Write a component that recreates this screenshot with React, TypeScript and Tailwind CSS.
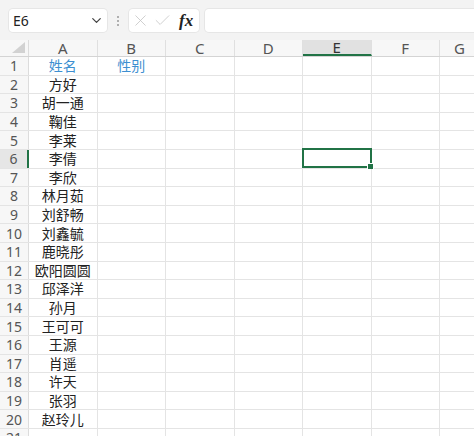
import { ChevronDown, X, Check } from 'lucide-react';

const COLS = ['A', 'B', 'C', 'D', 'E', 'F', 'G'];
const NAMES = [
  '方好', '胡一通', '鞠佳', '李莱', '李倩', '李欣', '林月茹', '刘舒畅', '刘鑫毓', '鹿晓彤',
  '欧阳圆圆', '邱泽洋', '孙月', '王可可', '王源', '肖遥', '许天', '张羽', '赵玲儿',
];

const FONT = { fontFamily: '"Noto Sans", "Noto Sans CJK SC", sans-serif' };
const COL_W = 'w-[68.5px]';

function Toolbar() {
  return (
    <div className="flex h-[40px] items-start bg-[#f3f3f3] pl-[9px] pt-[9px]">
      <div className="flex h-[23px] w-[98px] items-center justify-between rounded-[4px] bg-white pl-[4px] pr-[3px] shadow-[0_0_0_1px_#e6e6e6]">
        <span className="text-[14px] text-[#222]">E6</span>
        <ChevronDown className="h-[15px] w-[15px] text-[#444]" strokeWidth={2} />
      </div>
      <div className="flex h-[23px] w-[22px] flex-col items-center justify-center gap-[2px]">
        <span className="h-[2px] w-[2px] rounded-full bg-[#999]" />
        <span className="h-[2px] w-[2px] rounded-full bg-[#999]" />
        <span className="h-[2px] w-[2px] rounded-full bg-[#999]" />
      </div>
      <div className="flex h-[23px] w-[70px] items-center rounded-[4px] bg-white pl-[2px] shadow-[0_0_0_1px_#e6e6e6]">
        <X className="h-[19px] w-[19px] text-[#c4c4c4]" strokeWidth={1} />
        <Check className="ml-[3px] h-[19px] w-[19px] text-[#c4c4c4]" strokeWidth={1} />
        <span
          className="ml-[7px] text-[17px] font-bold italic leading-none text-[#222]"
          style={{ fontFamily: '"Liberation Serif", serif' }}
        >
          fx
        </span>
      </div>
      <div className="ml-[6px] h-[23px] flex-1 rounded-l-[4px] bg-white shadow-[0_0_0_1px_#e6e6e6]" />
    </div>
  );
}

function HeaderRow() {
  return (
    <div className="flex h-[17px] border-b border-[#d4d4d4] bg-[#f7f7f7]">
      <div className="relative w-[29px] shrink-0 border-r border-[#dcdcdc]">
        <div className="absolute bottom-[3px] right-[3px] h-0 w-0 border-b-[11px] border-l-[13px] border-b-[#d2d2d2] border-l-transparent" />
      </div>
      {COLS.map((c) => (
        <div
          key={c}
          className={`${c === 'G' ? 'w-[40px]' : COL_W} flex shrink-0 items-center justify-center border-r border-[#e0e0e0] text-[15px] leading-none ${
            c === 'E' ? 'border-b-2 border-b-[#217346] bg-[#e1e1e1] text-[#333]' : 'text-[#555]'
          }`}
        >
          {c}
        </div>
      ))}
    </div>
  );
}

function Row({ n }: { n: number }) {
  const selected = n === 6;
  let a = '';
  let b = '';
  if (n === 1) {
    a = '姓名';
    b = '性别';
  } else if (n - 2 < NAMES.length) {
    a = NAMES[n - 2];
  }
  return (
    <div className="flex h-[18.6px] border-b border-[#e4e4e4]">
      <div
        className={`flex w-[29px] shrink-0 items-center justify-center text-[14px] text-[#555] ${
          selected ? 'border-r-2 border-r-[#217346] bg-[#e6e6e6]' : 'border-r border-[#dcdcdc] bg-[#f7f7f7]'
        }`}
      >
        {n}
      </div>
      {COLS.map((c) => (
        <div
          key={c}
          className={`${c === 'G' ? 'w-[40px]' : COL_W} relative flex shrink-0 items-center justify-center border-r border-[#e4e4e4] text-[14px] ${
            n === 1 ? 'text-[#3d8fd1]' : 'text-[#222]'
          }`}
        >
          {c === 'A' ? a : c === 'B' ? b : ''}
          {selected && c === 'E' && (
            <div className="absolute -left-[1px] -top-[1.5px] h-[20px] w-[70px] border-2 border-[#217346]">
              <div className="absolute -bottom-[3px] -right-[3px] h-[5px] w-[5px] bg-[#217346] shadow-[0_0_0_1px_#fff]" />
            </div>
          )}
        </div>
      ))}
    </div>
  );
}

export default function App() {
  const rows = Array.from({ length: 21 }, (_, i) => i + 1);
  return (
    <div className="h-[436px] w-[474px] overflow-hidden bg-white" style={FONT}>
      <Toolbar />
      <HeaderRow />
      {rows.map((n) => (
        <Row key={n} n={n} />
      ))}
    </div>
  );
}
